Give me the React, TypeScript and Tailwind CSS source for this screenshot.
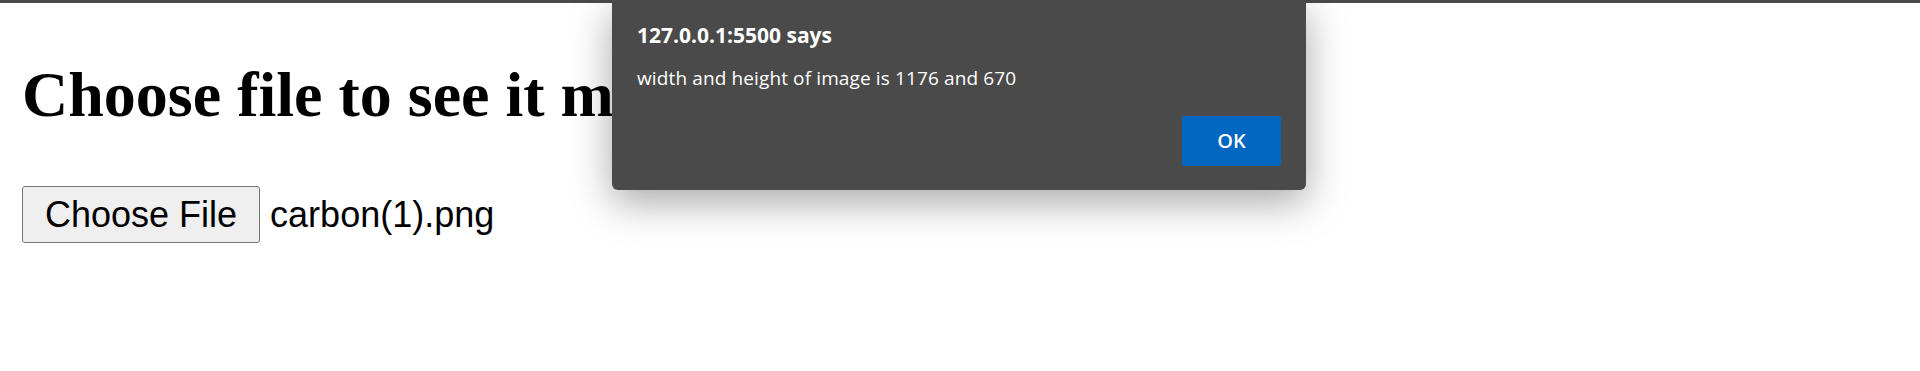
import React from 'react'

// Page behind the alert: heading + fake file input
const FilePicker = () => (
  <div className="flex items-center mt-[59px]">
    <button
      type="button"
      className="h-[57px] px-[22px] bg-[#efefef] border border-[#767676] rounded-[3px] text-[36px] text-black leading-none"
      style={{ fontFamily: '"Liberation Sans", Arial, sans-serif' }}
    >
      Choose File
    </button>
    <span
      className="ml-[10px] text-[36px] text-black"
      style={{ fontFamily: '"Liberation Sans", Arial, sans-serif' }}
    >
      carbon(1).png
    </span>
  </div>
)

// Browser alert() dialog
const AlertDialog = () => (
  <div
    className="absolute top-0 left-[612px] w-[694px] bg-[#4a4a4a] rounded-b-[6px] shadow-[0_12px_40px_rgba(0,0,0,0.35)] px-[25px] pt-[22px] pb-[24px] text-white"
    style={{ fontFamily: '"Open Sans", "Noto Sans", sans-serif' }}
  >
    <div className="text-[21px] font-bold leading-[26px]">127.0.0.1:5500 says</div>
    <div className="mt-[17px] text-[19px] leading-[26px] tracking-[0.12px]">
      width and height of image is 1176 and 670
    </div>
    <div className="mt-[25px] flex justify-end">
      <button
        type="button"
        className="w-[99px] h-[50px] bg-[#0067c0] rounded-[2px] text-[20px] font-semibold text-white"
      >
        OK
      </button>
    </div>
  </div>
)

export default function App() {
  return (
    <div className="relative w-[1920px] h-[371px] bg-white overflow-hidden">
      <div className="h-[3px] bg-[#4a4a4a]" />
      <div className="pl-[22px]">
        <h1
          className="mt-[60px] text-[64px] font-bold leading-[64px] text-black whitespace-nowrap"
          style={{ fontFamily: '"Liberation Serif", "Times New Roman", serif' }}
        >
          Choose file to see it magic
        </h1>
        <FilePicker />
      </div>
      <AlertDialog />
    </div>
  )
}
